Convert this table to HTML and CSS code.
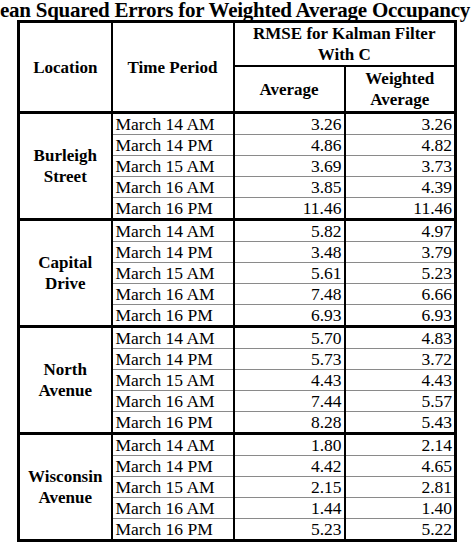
FILE: index.html
```html
<!DOCTYPE html>
<html>
<head>
<meta charset="utf-8">
<link rel="stylesheet" href="styles.css">
</head>
<body>
<div class="title">ean Squared Errors for Weighted Average Occupancy</div>
<table class="rmse">
  <colgroup>
    <col class="c-loc"><col class="c-time"><col class="c-avg"><col class="c-wavg">
  </colgroup>
  <thead>
    <tr class="h1">
      <th rowspan="2" class="loc-h">Location</th>
      <th rowspan="2" class="time-h">Time Period</th>
      <th colspan="2" class="group-h">RMSE for Kalman Filter<br>With C</th>
    </tr>
    <tr class="h2">
      <th class="avg-h">Average</th>
      <th class="wavg-h">Weighted<br>Average</th>
    </tr>
  </thead>
  <tbody class="grp">
    <tr><td rowspan="5" class="loc">Burleigh<br>Street</td><td class="tp">March 14 AM</td><td class="num avg">3.26</td><td class="num">3.26</td></tr>
    <tr><td class="tp">March 14 PM</td><td class="num avg">4.86</td><td class="num">4.82</td></tr>
    <tr><td class="tp">March 15 AM</td><td class="num avg">3.69</td><td class="num">3.73</td></tr>
    <tr><td class="tp">March 16 AM</td><td class="num avg">3.85</td><td class="num">4.39</td></tr>
    <tr><td class="tp">March 16 PM</td><td class="num avg">11.46</td><td class="num">11.46</td></tr>
  </tbody>
  <tbody class="grp">
    <tr><td rowspan="5" class="loc">Capital<br>Drive</td><td class="tp">March 14 AM</td><td class="num avg">5.82</td><td class="num">4.97</td></tr>
    <tr><td class="tp">March 14 PM</td><td class="num avg">3.48</td><td class="num">3.79</td></tr>
    <tr><td class="tp">March 15 AM</td><td class="num avg">5.61</td><td class="num">5.23</td></tr>
    <tr><td class="tp">March 16 AM</td><td class="num avg">7.48</td><td class="num">6.66</td></tr>
    <tr><td class="tp">March 16 PM</td><td class="num avg">6.93</td><td class="num">6.93</td></tr>
  </tbody>
  <tbody class="grp">
    <tr><td rowspan="5" class="loc">North<br>Avenue</td><td class="tp">March 14 AM</td><td class="num avg">5.70</td><td class="num">4.83</td></tr>
    <tr><td class="tp">March 14 PM</td><td class="num avg">5.73</td><td class="num">3.72</td></tr>
    <tr><td class="tp">March 15 AM</td><td class="num avg">4.43</td><td class="num">4.43</td></tr>
    <tr><td class="tp">March 16 AM</td><td class="num avg">7.44</td><td class="num">5.57</td></tr>
    <tr><td class="tp">March 16 PM</td><td class="num avg">8.28</td><td class="num">5.43</td></tr>
  </tbody>
  <tbody class="grp">
    <tr><td rowspan="5" class="loc">Wisconsin<br>Avenue</td><td class="tp">March 14 AM</td><td class="num avg">1.80</td><td class="num">2.14</td></tr>
    <tr><td class="tp">March 14 PM</td><td class="num avg">4.42</td><td class="num">4.65</td></tr>
    <tr><td class="tp">March 15 AM</td><td class="num avg">2.15</td><td class="num">2.81</td></tr>
    <tr><td class="tp">March 16 AM</td><td class="num avg">1.44</td><td class="num">1.40</td></tr>
    <tr><td class="tp">March 16 PM</td><td class="num avg">5.23</td><td class="num">5.22</td></tr>
  </tbody>
</table>
</body>
</html>
```
FILE: styles.css
```css
html, body {
  margin: 0;
  padding: 0;
  background: #fff;
  color: #000;
  font-family: "Liberation Serif", "Times New Roman", serif;
}

.title {
  font-weight: bold;
  font-size: 21px;
  line-height: 21px;
  height: 20px;
  letter-spacing: -0.25px;
  white-space: nowrap;
}

.rmse {
  border-collapse: collapse;
  margin-left: 17px;
  width: 437px;
  table-layout: fixed;
  border: 3px solid #000;
}

.c-loc { width: 93px; }
.c-time { width: 122px; }
.c-avg { width: 111px; }
.c-wavg { width: 111px; }

.rmse th {
  font-weight: bold;
  font-size: 17px;
  line-height: 21px;
  text-align: center;
  vertical-align: middle;
  padding: 0;
  border: 2px solid #000;
}

.rmse .h1 th { height: 40px; }
.rmse .h2 th { height: 44px; }

.rmse td {
  font-size: 17.5px;
  line-height: 20px;
  height: 20px;
  padding: 0;
  border-top: 1px solid #8a8a8a;
  border-bottom: 1px solid #8a8a8a;
  white-space: nowrap;
}

.rmse .grp {
  border-top: 3px solid #000;
}

.rmse td.loc {
  font-weight: bold;
  font-size: 17px;
  text-align: center;
  vertical-align: middle;
  line-height: 21px;
  border-right: 2px solid #000;
}

.rmse td.tp {
  padding-left: 3px;
  border-right: 2px solid #000;
}

.rmse td.num {
  text-align: right;
  padding-right: 2px;
}

.rmse td.avg {
  border-right: 2px solid #000;
}
```
